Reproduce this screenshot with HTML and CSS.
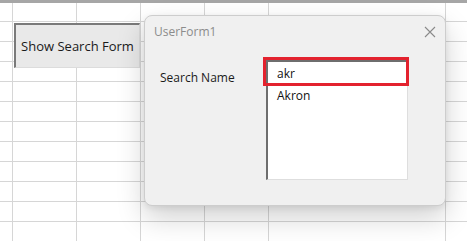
FILE: index.html
```html
<!DOCTYPE html>
<html lang="en">
<head>
    <meta charset="UTF-8">
    <meta name="viewport" content="width=device-width, initial-scale=1.0">
    <title>Show Search Form</title>
    <link rel="stylesheet" href="styles.css">
</head>
<body>
    <div class="sheet">
        <!-- macro button sitting on the worksheet -->
        <button class="sheet-button">Show Search Form</button>

        <!-- the VBA userform -->
        <div class="userform">
            <div class="titlebar">
                <span class="title">UserForm1</span>
                <svg class="close" width="12" height="12" viewBox="0 0 12 12">
                    <path d="M1 1 L11 11 M11 1 L1 11" stroke="#8a8a8a" stroke-width="1.1" fill="none"/>
                </svg>
            </div>
            <div class="form-body">
                <label for="search-name">Search Name</label>
                <div class="search-box">
                    <input type="text" id="search-name" value="akr">
                    <ul class="listbox">
                        <li>Akron</li>
                    </ul>
                    <div class="highlight"></div>
                </div>
            </div>
        </div>
    </div>
</body>
</html>
```

FILE: styles.css
```css
* {
    margin: 0;
    padding: 0;
    box-sizing: border-box;
}
body {
    font-family: "Open Sans", "Noto Sans", sans-serif;
    background-color: #fff;
    overflow: hidden;
}
.sheet {
    position: relative;
    width: 467px;
    height: 241px;
    border-top: 3px solid #a6a6a6;
    background-color: #fff;
    background-image:
        linear-gradient(to right, transparent 12px, #d6d6d6 12px, #d6d6d6 13px, transparent 13px,
            transparent 76px, #d6d6d6 76px, #d6d6d6 77px, transparent 77px,
            transparent 140px, #d6d6d6 140px, #d6d6d6 141px, transparent 141px,
            transparent 204px, #d6d6d6 204px, #d6d6d6 205px, transparent 205px,
            transparent 268px, #d6d6d6 268px, #d6d6d6 269px, transparent 269px,
            transparent 445px, #d6d6d6 445px, #d6d6d6 446px, transparent 446px),
        repeating-linear-gradient(to bottom, transparent 0, transparent 18px, #d6d6d6 18px, #d6d6d6 19px, transparent 19px, transparent 20px);
}
.sheet-button {
    position: absolute;
    left: 14px;
    top: 20px;
    width: 126px;
    height: 45px;
    font-family: inherit;
    font-size: 13px;
    color: #1a1a1a;
    background-color: #e9e9e9;
    border-top: 2px solid #7a7a7a;
    border-left: 2px solid #7a7a7a;
    border-right: 1px solid #dcdcdc;
    border-bottom: 1px solid #dcdcdc;
}
.userform {
    position: absolute;
    left: 144px;
    top: 12px;
    width: 302px;
    height: 191px;
    background-color: #f0f0f0;
    border: 1px solid #cdcdcd;
    border-radius: 8px;
    box-shadow: 0 12px 28px rgba(0, 0, 0, 0.18), 0 2px 6px rgba(0, 0, 0, 0.08);
}
.titlebar {
    display: flex;
    align-items: center;
    justify-content: space-between;
    height: 31px;
    padding: 0 9px 0 9px;
}
.title {
    font-size: 12px;
    color: #8c8c8c;
}
.form-body {
    display: flex;
    padding: 13px 0 0 15px;
}
label {
    width: 106px;
    font-size: 12px;
    color: #1a1a1a;
    margin-top: 9px;
}
.search-box {
    position: relative;
    display: flex;
    flex-direction: column;
    width: 142px;
}
input[type="text"] {
    height: 26px;
    font-family: inherit;
    font-size: 12px;
    color: #111;
    padding: 0 9px;
    background-color: #fff;
    border-top: 2px solid #6e6e6e;
    border-left: 2px solid #6e6e6e;
    border-right: 1px solid #e0e0e0;
    border-bottom: 1px solid #e0e0e0;
    outline: none;
}
.listbox {
    list-style: none;
    height: 94px;
    font-size: 12px;
    color: #111;
    padding: 1px 9px;
    background-color: #fff;
    border-left: 2px solid #6e6e6e;
    border-right: 1px solid #dedede;
    border-bottom: 1px solid #dedede;
}
.highlight {
    position: absolute;
    left: -3px;
    top: -3px;
    width: 146px;
    height: 29px;
    border: 3px solid #e3222e;
}
```
